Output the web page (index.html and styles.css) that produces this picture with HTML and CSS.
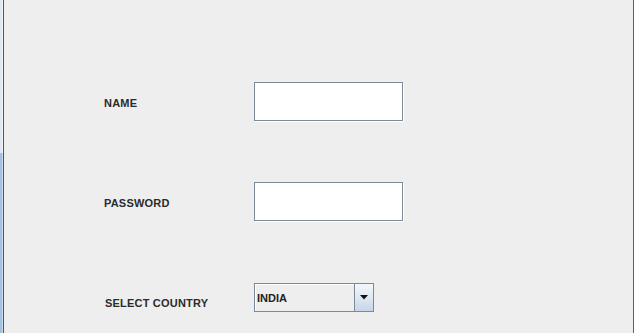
FILE: index.html
```html
<!DOCTYPE html>
<html>
<head>
<meta charset="utf-8">
<link rel="stylesheet" href="styles.css">
</head>
<body>
<div class="window">
  <div class="edge-left"><div class="edge-top"></div><div class="edge-bottom"></div></div>
  <div class="content">
    <form class="form">
      <label class="label">NAME</label>
      <div class="cell"><input class="field" type="text"></div>
      <label class="label">PASSWORD</label>
      <div class="cell"><input class="field" type="password"></div>
      <label class="label label-country">SELECT COUNTRY</label>
      <div class="cell cell-combo">
        <div class="combo">
          <span class="combo-value">INDIA</span>
          <span class="combo-btn"><svg width="8" height="5" viewBox="0 0 8 5"><path d="M0 0H8L4 4.5Z" fill="#111"/></svg></span>
        </div>
      </div>
    </form>
  </div>
  <div class="edge-right"></div>
</div>
</body>
</html>
```

FILE: styles.css
```css
html, body {
  margin: 0;
  padding: 0;
  background: #eeeeee;
}
.window {
  display: flex;
  width: 634px;
  height: 333px;
  overflow: hidden;
  background: #eeeeee;
  font-family: "Liberation Sans", Arial, sans-serif;
}
.edge-left {
  width: 3px;
  display: flex;
  flex-direction: column;
  border-right: 1px solid #4c5563;
}
.edge-top {
  height: 153px;
  background: linear-gradient(to right, #dfe7f1 0, #dfe7f1 2px, #f2f4f7 2px);
}
.edge-bottom {
  flex: 1;
  background: linear-gradient(to right, #a3c1e0 0, #a3c1e0 2px, #c9dcee 2px);
}
.edge-right {
  width: 1px;
  background: #59616e;
}
.content {
  flex: 1;
}
.form {
  margin: 0;
  padding: 53px 0 0 100px;
  display: grid;
  grid-template-columns: 150px 160px;
  grid-auto-rows: 100px;
  align-items: center;
}
.label {
  font-size: 11px;
  font-weight: bold;
  color: #2b2b2b;
  letter-spacing: 0.2px;
}
.label-country {
  padding-left: 1px;
}
.cell {
  display: flex;
  align-items: center;
}
.field {
  box-sizing: border-box;
  width: 149px;
  height: 39px;
  margin: 0 0 3px 0;
  padding: 0;
  border: 1px solid #7a8a99;
  background: #ffffff;
  box-shadow: 1px 1px 0 #ffffff;
  outline: none;
}
.cell-combo {
  padding-bottom: 11px;
}
.combo {
  box-sizing: border-box;
  width: 120px;
  height: 29px;
  display: flex;
  border: 1px solid #7a8a99;
  background: #eeeeee;
}
.combo-value {
  flex: 1;
  display: flex;
  align-items: center;
  padding-left: 1px;
  padding-bottom: 1px;
  font-size: 11px;
  font-weight: bold;
  color: #222222;
  border-top: 1px solid #ffffff;
  border-left: 1px solid #ffffff;
}
.combo-btn {
  box-sizing: border-box;
  width: 19px;
  display: flex;
  align-items: center;
  justify-content: center;
  border-left: 1px solid #7a8a99;
  background: linear-gradient(to bottom, #f4f8fb 0%, #dde8f2 50%, #c5d6e7 100%);
  padding-right: 1px;
}
```
